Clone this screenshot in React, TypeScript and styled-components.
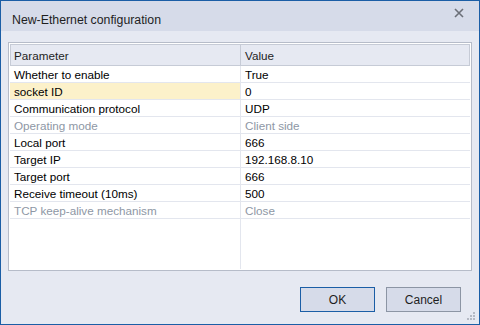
import styled, { createGlobalStyle } from "styled-components";

const GlobalStyle = createGlobalStyle`
  html, body {
    margin: 0;
    padding: 0;
    background: #ffffff;
  }
  * {
    box-sizing: border-box;
  }
`;

interface Param {
  name: string;
  value: string;
  disabled?: boolean;
  selected?: boolean;
}

const params: Param[] = [
  { name: "Whether to enable", value: "True" },
  { name: "socket ID", value: "0", selected: true },
  { name: "Communication protocol", value: "UDP" },
  { name: "Operating mode", value: "Client side", disabled: true },
  { name: "Local port", value: "666" },
  { name: "Target IP", value: "192.168.8.10" },
  { name: "Target port", value: "666" },
  { name: "Receive timeout (10ms)", value: "500" },
  { name: "TCP keep-alive mechanism", value: "Close", disabled: true },
];

const Window = styled.div`
  width: 480px;
  height: 325px;
  border: 1px solid #1b5ea6;
  background: #e6e9f2;
  display: flex;
  flex-direction: column;
  font-family: "Liberation Sans", Arial, sans-serif;
  font-size: 11.7px;
  color: #000;
  position: relative;
`;

const TitleBar = styled.div`
  height: 30px;
  background: #d6dbe9;
  display: flex;
  align-items: center;
  justify-content: space-between;
  padding: 0 14px 0 11px;
  color: #1e1e1e;
  font-size: 12.3px;
`;

const Title = styled.span`
  padding-top: 8px;
`;

const CloseButton = styled.span`
  width: 12px;
  height: 12px;
  display: flex;
  align-items: center;
  justify-content: center;
  margin-top: -7px;
`;

const Body = styled.div`
  flex: 1;
  display: flex;
  flex-direction: column;
  padding: 11px 7px 0 7px;
`;

const Grid = styled.div`
  height: 229px;
  border: 1px solid #b6bcc9;
  background: #ffffff;
  padding: 1px;
  display: flex;
  flex-direction: column;
`;

const HeaderRow = styled.div`
  display: flex;
  height: 22px;
  border: 1px solid #c6cbd6;
  background: #e6e9f2;
`;

const HeaderCell = styled.div<{ $first?: boolean }>`
  width: ${(p) => (p.$first ? "230px" : "auto")};
  flex: ${(p) => (p.$first ? "none" : "1")};
  border-right: ${(p) => (p.$first ? "1px solid #c6cbd6" : "none")};
  display: flex;
  align-items: center;
  padding-left: ${(p) => (p.$first ? "3px" : "4px")};
  color: #1e1e1e;
`;

const Row = styled.div`
  display: flex;
  height: 17px;
  border-bottom: 1px solid #e3e6ee;
`;

const Cell = styled.div<{ $first?: boolean; $disabled?: boolean; $selected?: boolean }>`
  width: ${(p) => (p.$first ? "231px" : "auto")};
  flex: ${(p) => (p.$first ? "none" : "1")};
  border-right: ${(p) => (p.$first ? "1px solid #e3e6ee" : "none")};
  background: ${(p) => (p.$selected ? "#fcf1ca" : "transparent")};
  color: ${(p) => (p.$disabled ? "#8e97a5" : "#000")};
  display: flex;
  align-items: center;
  padding-left: 4px;
  white-space: nowrap;
`;

const Filler = styled.div`
  flex: 1;
  display: flex;
`;

const FillerCell = styled.div`
  width: 231px;
  border-right: 1px solid #e3e6ee;
`;

const Footer = styled.div`
  display: flex;
  justify-content: flex-end;
  gap: 11px;
  padding: 16px 11px 0 0;
`;

const Button = styled.button<{ $default?: boolean }>`
  width: 75px;
  height: 25px;
  background: #d6dbe9;
  border: 1px solid ${(p) => (p.$default ? "#1b5ea6" : "#8c95a4")};
  font-family: "Liberation Sans", Arial, sans-serif;
  font-size: 12px;
  color: #1e1e1e;
  padding: 0;
  padding-top: 1px;
`;

const Grip = styled.svg`
  position: absolute;
  right: 3px;
  bottom: 3px;
`;

export default function App() {
  return (
    <>
      <GlobalStyle />
      <Window>
        <TitleBar>
          <Title>New-Ethernet configuration</Title>
          <CloseButton>
            <svg width="10" height="10" viewBox="0 0 10 10">
              <path d="M1 1 L9 9 M9 1 L1 9" stroke="#6b6f78" strokeWidth="1.6" />
            </svg>
          </CloseButton>
        </TitleBar>
        <Body>
          <Grid>
            <HeaderRow>
              <HeaderCell $first>Parameter</HeaderCell>
              <HeaderCell>Value</HeaderCell>
            </HeaderRow>
            {params.map((p) => (
              <Row key={p.name}>
                <Cell $first $disabled={p.disabled} $selected={p.selected}>
                  {p.name}
                </Cell>
                <Cell $disabled={p.disabled}>{p.value}</Cell>
              </Row>
            ))}
            <Filler>
              <FillerCell />
            </Filler>
          </Grid>
          <Footer>
            <Button $default>OK</Button>
            <Button>Cancel</Button>
          </Footer>
        </Body>
        <Grip width="10" height="10" viewBox="0 0 10 10">
          <g fill="#b4b9c4">
            <rect x="7" y="1" width="2" height="2" />
            <rect x="4" y="4" width="2" height="2" />
            <rect x="7" y="4" width="2" height="2" />
            <rect x="1" y="7" width="2" height="2" />
            <rect x="4" y="7" width="2" height="2" />
            <rect x="7" y="7" width="2" height="2" />
          </g>
        </Grip>
      </Window>
    </>
  );
}
